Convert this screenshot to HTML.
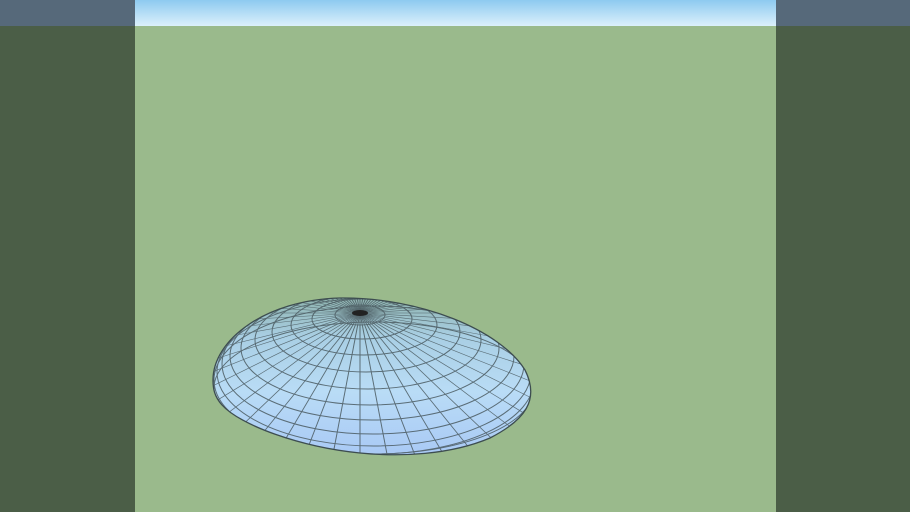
<!DOCTYPE html>
<html><head><style>
html,body{margin:0;padding:0;width:910px;height:512px;overflow:hidden;background:#9aba8c}
svg{display:block;position:fixed;left:0;top:0}
</style></head><body>
<svg width="910" height="512" viewBox="0 0 910 512" xmlns="http://www.w3.org/2000/svg">
<defs>
<linearGradient id="sky" x1="0" y1="0" x2="0" y2="1">
<stop offset="0" stop-color="#8ecaf0"/><stop offset="1" stop-color="#dcf0fb"/>
</linearGradient>
<linearGradient id="dome" x1="0" y1="0" x2="0" y2="1">
<stop offset="0" stop-color="#8fb4b0"/><stop offset="0.25" stop-color="#a9cfe4"/><stop offset="0.6" stop-color="#b9dcf6"/><stop offset="1" stop-color="#a9c9f5"/>
</linearGradient>
<clipPath id="cl"><path id="outline" d="M213,380 C213,340 265,300 340,298 C420,297 500,330 525,370 C540,400 525,420 490,438 C450,455 400,457 360,453 C300,447 240,425 222,405 C214,396 213,388 213,380 Z"/></clipPath>
<line id="r" x1="0" y1="0" x2="0" y2="420"/>
</defs>
<rect x="0" y="0" width="910" height="26" fill="url(#sky)"/>
<rect x="0" y="26" width="910" height="486" fill="#9aba8c"/>
<rect x="0" y="0" width="135" height="26" fill="#56697a"/>
<rect x="0" y="26" width="135" height="486" fill="#4b5e47"/>
<rect x="776" y="0" width="134" height="26" fill="#56697a"/>
<rect x="776" y="26" width="134" height="486" fill="#4b5e47"/>
<use href="#outline" fill="url(#dome)"/>
<g clip-path="url(#cl)" fill="none" stroke="#4a5a60" stroke-width="1" opacity="0.85">
<ellipse cx="360" cy="315" rx="25" ry="10"/>
<ellipse cx="362" cy="319" rx="50" ry="20"/>
<ellipse cx="364" cy="325" rx="73" ry="30"/>
<ellipse cx="366" cy="332" rx="94" ry="40"/>
<ellipse cx="368" cy="340" rx="113" ry="49"/>
<ellipse cx="370" cy="348" rx="129" ry="57"/>
<ellipse cx="372" cy="356" rx="142" ry="64"/>
<ellipse cx="373" cy="364" rx="151" ry="70"/>
<ellipse cx="374" cy="372" rx="157" ry="74"/>
<ellipse cx="374" cy="380" rx="160" ry="74"/>
<ellipse cx="374" cy="388" rx="160" ry="66"/>
<g transform="translate(360,313) scale(1,0.55)">
<use href="#r" transform="rotate(0)"/><use href="#r" transform="rotate(6)"/><use href="#r" transform="rotate(12)"/><use href="#r" transform="rotate(18)"/><use href="#r" transform="rotate(24)"/><use href="#r" transform="rotate(30)"/><use href="#r" transform="rotate(36)"/><use href="#r" transform="rotate(42)"/><use href="#r" transform="rotate(48)"/><use href="#r" transform="rotate(54)"/><use href="#r" transform="rotate(60)"/><use href="#r" transform="rotate(66)"/><use href="#r" transform="rotate(72)"/><use href="#r" transform="rotate(78)"/><use href="#r" transform="rotate(84)"/><use href="#r" transform="rotate(90)"/><use href="#r" transform="rotate(96)"/><use href="#r" transform="rotate(102)"/><use href="#r" transform="rotate(108)"/><use href="#r" transform="rotate(114)"/><use href="#r" transform="rotate(120)"/><use href="#r" transform="rotate(126)"/><use href="#r" transform="rotate(132)"/><use href="#r" transform="rotate(138)"/><use href="#r" transform="rotate(144)"/><use href="#r" transform="rotate(150)"/><use href="#r" transform="rotate(156)"/><use href="#r" transform="rotate(162)"/><use href="#r" transform="rotate(168)"/><use href="#r" transform="rotate(174)"/><use href="#r" transform="rotate(180)"/><use href="#r" transform="rotate(186)"/><use href="#r" transform="rotate(192)"/><use href="#r" transform="rotate(198)"/><use href="#r" transform="rotate(204)"/><use href="#r" transform="rotate(210)"/><use href="#r" transform="rotate(216)"/><use href="#r" transform="rotate(222)"/><use href="#r" transform="rotate(228)"/><use href="#r" transform="rotate(234)"/><use href="#r" transform="rotate(240)"/><use href="#r" transform="rotate(246)"/><use href="#r" transform="rotate(252)"/><use href="#r" transform="rotate(258)"/><use href="#r" transform="rotate(264)"/><use href="#r" transform="rotate(270)"/><use href="#r" transform="rotate(276)"/><use href="#r" transform="rotate(282)"/><use href="#r" transform="rotate(288)"/><use href="#r" transform="rotate(294)"/><use href="#r" transform="rotate(300)"/><use href="#r" transform="rotate(306)"/><use href="#r" transform="rotate(312)"/><use href="#r" transform="rotate(318)"/><use href="#r" transform="rotate(324)"/><use href="#r" transform="rotate(330)"/><use href="#r" transform="rotate(336)"/><use href="#r" transform="rotate(342)"/><use href="#r" transform="rotate(348)"/><use href="#r" transform="rotate(354)"/>
</g>
</g>
<ellipse cx="360" cy="313" rx="8" ry="3" fill="#222"/>
<use href="#outline" fill="none" stroke="#3d4d50" stroke-width="1.3"/>
</svg>
</body></html>
